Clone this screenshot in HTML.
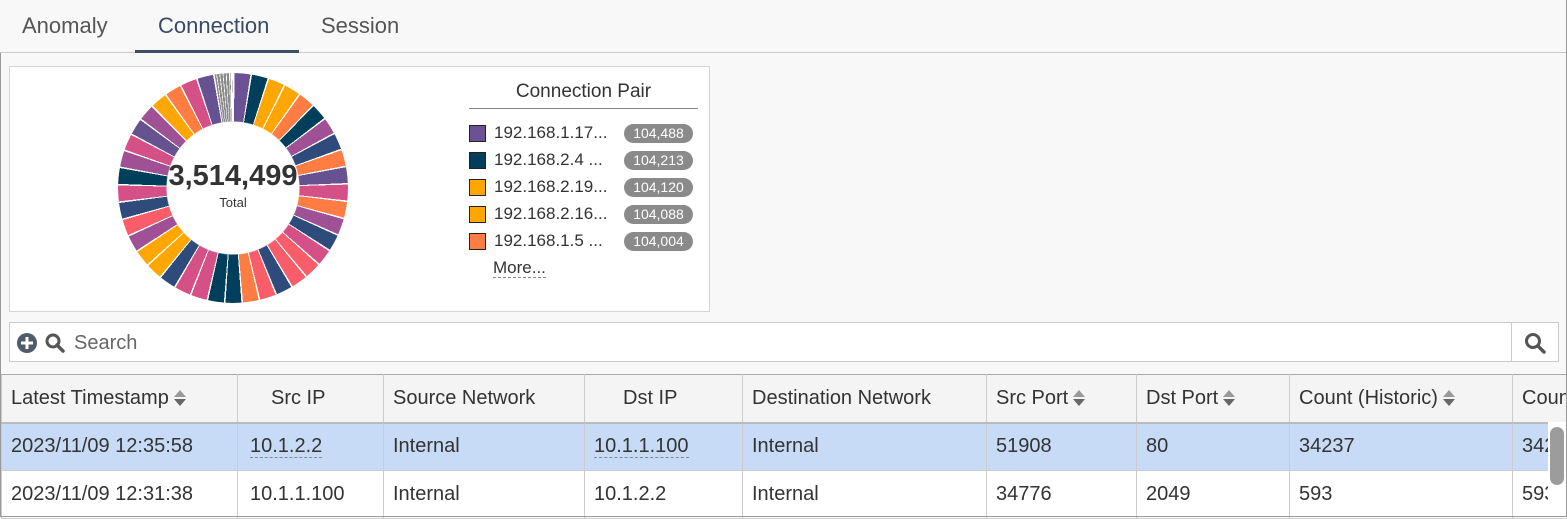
<!DOCTYPE html>
<html><head><meta charset="utf-8"><style>
*{box-sizing:border-box;margin:0;padding:0}
body{width:1567px;height:517px;overflow:hidden;background:#fff;font-family:"Liberation Sans",sans-serif;color:#333;position:relative}
.frame{position:absolute;left:0;top:0;width:1567px;height:517px;border:1px solid #999;background:#f8f8f8}
.tabs{position:absolute;left:0;top:0;width:1566px;height:53px;border-bottom:1px solid #ccc;background:#f8f8f8}
.tab{position:absolute;top:13px;font-size:22px;color:#555}
.tab.act{color:#3a4a66}
.ul{position:absolute;left:135px;top:50px;width:164px;height:3px;background:#3f4d69}
.panel{position:absolute;left:9px;top:66px;width:701px;height:246px;background:#fff;border:1px solid #d4d4d4}
.donut{position:absolute;left:118px;top:73px;width:230px;height:230px;border-radius:50%;
-webkit-mask:radial-gradient(circle,transparent 66px,#000 67px);mask:radial-gradient(circle,transparent 66px,#000 67px)}
.d1{background:conic-gradient(#6a5294 0 8.75deg,#003f5c 0 17.5deg,#ffa600 0 26.25deg,#ffa600 0 35deg,#ff7c43 0 43.75deg,#003f5c 0 52.5deg,#a05195 0 61.25deg,#2f4b7c 0 70deg,#ff7c43 0 78.75deg,#665191 0 87.5deg,#d45087 0 96.25deg,#ff7c43 0 105deg,#a05195 0 113.75deg,#2f4b7c 0 122.5deg,#d45087 0 131.25deg,#f95d6a 0 140deg,#f95d6a 0 148.75deg,#2f4b7c 0 157.5deg,#f95d6a 0 166.25deg,#ff7c43 0 175deg,#003f5c 0 183.75deg,#003f5c 0 192.5deg,#d45087 0 201.25deg,#d45087 0 210deg,#2f4b7c 0 218.75deg,#ffa600 0 227.5deg,#ffa600 0 236.25deg,#a05195 0 245deg,#f95d6a 0 253.75deg,#2f4b7c 0 262.5deg,#d45087 0 271.25deg,#003f5c 0 280deg,#a05195 0 288.75deg,#d45087 0 297.5deg,#665191 0 306.25deg,#a05195 0 315deg,#ffa600 0 323.75deg,#ff7c43 0 332.5deg,#d45087 0 341.25deg,#665191 0 350deg,#8a8a8a 0 360deg)}
.d2{background:repeating-conic-gradient(#fff 0 0.8deg,transparent 0.8deg 8.75deg)}
.d3{background:repeating-conic-gradient(from 350deg,#fff 0 0.4deg,transparent 0.4deg 1.6deg);-webkit-mask:conic-gradient(transparent 0 350deg,#000 350deg),radial-gradient(circle,transparent 66px,#000 67px);-webkit-mask-composite:source-in;mask:conic-gradient(transparent 0 350deg,#000 350deg) intersect,radial-gradient(circle,transparent 66px,#000 67px)}
.tot{position:absolute;left:118px;top:160px;width:230px;text-align:center;font-size:29px;font-weight:bold;color:#333}
.totl{position:absolute;left:118px;top:195px;width:230px;text-align:center;font-size:13px;color:#333}
.lh{position:absolute;left:469px;top:81px;width:229px;height:28px;border-bottom:1px solid #888;text-align:center;font-size:19px;color:#333}
.li{position:absolute;left:469px;height:20px;font-size:17px;color:#333}
.sw{position:absolute;left:0;top:2px;width:17px;height:17px;border:1px solid #222}
.li .t{position:absolute;left:25px;top:0;white-space:nowrap}
.bd{position:absolute;left:155px;top:1px;width:69px;height:19px;border-radius:10px;background:#8a8a8a;color:#fff;font-size:14px;text-align:center;line-height:19px}
.more{position:absolute;left:493px;top:258px;font-size:17px;border-bottom:1px dashed #888;line-height:19px}
.search{position:absolute;left:9px;top:322px;width:1550px;height:40px;background:#fff;border:1px solid #ccc}
.sbtn{position:absolute;right:0;top:0;width:47px;height:38px;border-left:1px solid #ccc}
.stxt{position:absolute;left:64px;top:9px;font-size:20px;color:#666}
table{position:absolute;left:1px;top:374px;border-collapse:collapse;font-size:20px;table-layout:fixed;width:1600px}
td,th{border:1px solid #ccc;border-top:none;height:48px;padding:0 9px;font-weight:normal;text-align:left;white-space:nowrap;overflow:hidden}
th{background:#f4f4f4;border-top:1px solid #aaa;border-bottom:2px solid #bbb;color:#333}
tr.sel td{background:#c7dbf7}
tr.w td{background:#fff}
.dash{border-bottom:1px dashed #888}
.sort{display:inline-block;vertical-align:middle;margin-left:5px;width:12px;height:16px;position:relative}
.sort:before{content:"";position:absolute;left:0;top:0;border:6px solid transparent;border-bottom:7px solid #999;border-top:0}
.sort:after{content:"";position:absolute;left:0;top:9px;border:6px solid transparent;border-top:7px solid #666;border-bottom:0}
.sb{position:absolute;left:1550px;top:427px;width:14px;height:58px;border-radius:7px;background:#9c9c9c}
.rcov{position:absolute;left:1566px;top:0;width:1px;height:517px;background:#999}
</style></head><body>
<div class="frame"></div>
<div class="tabs">
<div class="tab" style="left:22px">Anomaly</div>
<div class="tab act" style="left:158px">Connection</div>
<div class="tab" style="left:321px">Session</div>
<div class="ul"></div>
</div>
<div class="panel"></div>
<div class="donut d1"></div>
<div class="donut d2"></div>
<div class="donut d3"></div>
<div class="tot">3,514,499</div>
<div class="totl">Total</div>
<div class="lh">Connection Pair</div>
<div class="li" style="top:123px"><div class="sw" style="background:#6a5294"></div><span class="t">192.168.1.17...</span><div class="bd">104,488</div></div>
<div class="li" style="top:150px"><div class="sw" style="background:#003f5c"></div><span class="t">192.168.2.4 ...</span><div class="bd">104,213</div></div>
<div class="li" style="top:177px"><div class="sw" style="background:#ffa600"></div><span class="t">192.168.2.19...</span><div class="bd">104,120</div></div>
<div class="li" style="top:204px"><div class="sw" style="background:#ffa600"></div><span class="t">192.168.2.16...</span><div class="bd">104,088</div></div>
<div class="li" style="top:231px"><div class="sw" style="background:#ff7c43"></div><span class="t">192.168.1.5 ...</span><div class="bd">104,004</div></div>
<div class="more">More...</div>
<div class="search">
<svg style="position:absolute;left:6px;top:9px" width="60" height="22" viewBox="0 0 60 22"><circle cx="11" cy="11" r="10" fill="#4f5a6b"/><rect x="9.5" y="5" width="3" height="12" fill="#fff"/><rect x="5" y="9.5" width="12" height="3" fill="#fff"/><circle cx="37" cy="9" r="6" fill="none" stroke="#555" stroke-width="3"/><line x1="41" y1="13" x2="47" y2="19" stroke="#555" stroke-width="3.5" stroke-linecap="round"/></svg>
<div class="stxt">Search</div>
<div class="sbtn"><svg style="position:absolute;left:12px;top:9px" width="24" height="22" viewBox="0 0 24 22"><circle cx="9" cy="9" r="6.5" fill="none" stroke="#555" stroke-width="3"/><line x1="14" y1="14" x2="20" y2="20" stroke="#555" stroke-width="3.5" stroke-linecap="round"/></svg></div>
</div>
<table>
<colgroup><col style="width:236px"><col style="width:146px"><col style="width:201px"><col style="width:158px"><col style="width:244px"><col style="width:150px"><col style="width:153px"><col style="width:223px"><col style="width:89px"></colgroup>
<tr><th>Latest Timestamp<span class="sort"></span></th><th style="padding-left:33px">Src IP</th><th>Source Network</th><th style="padding-left:38px">Dst IP</th><th>Destination Network</th><th>Src Port<span class="sort"></span></th><th>Dst Port<span class="sort"></span></th><th>Count (Historic)<span class="sort"></span></th><th>Count</th></tr>
<tr class="sel"><td>2023/11/09 12:35:58</td><td style="padding-left:12px"><span class="dash">10.1.2.2</span></td><td>Internal</td><td><span class="dash">10.1.1.100</span></td><td>Internal</td><td>51908</td><td>80</td><td>34237</td><td>34237</td></tr>
<tr class="w"><td>2023/11/09 12:31:38</td><td style="padding-left:12px">10.1.1.100</td><td>Internal</td><td>10.1.2.2</td><td>Internal</td><td>34776</td><td>2049</td><td>593</td><td>593</td></tr>
</table>
<div style="position:absolute;left:1548px;top:422px;width:18px;height:95px;background:#fff"></div>
<div class="sb"></div>
<div class="rcov"></div>
<div style="position:absolute;left:0;top:516px;width:1567px;height:1px;background:#999"></div>
</body></html>
